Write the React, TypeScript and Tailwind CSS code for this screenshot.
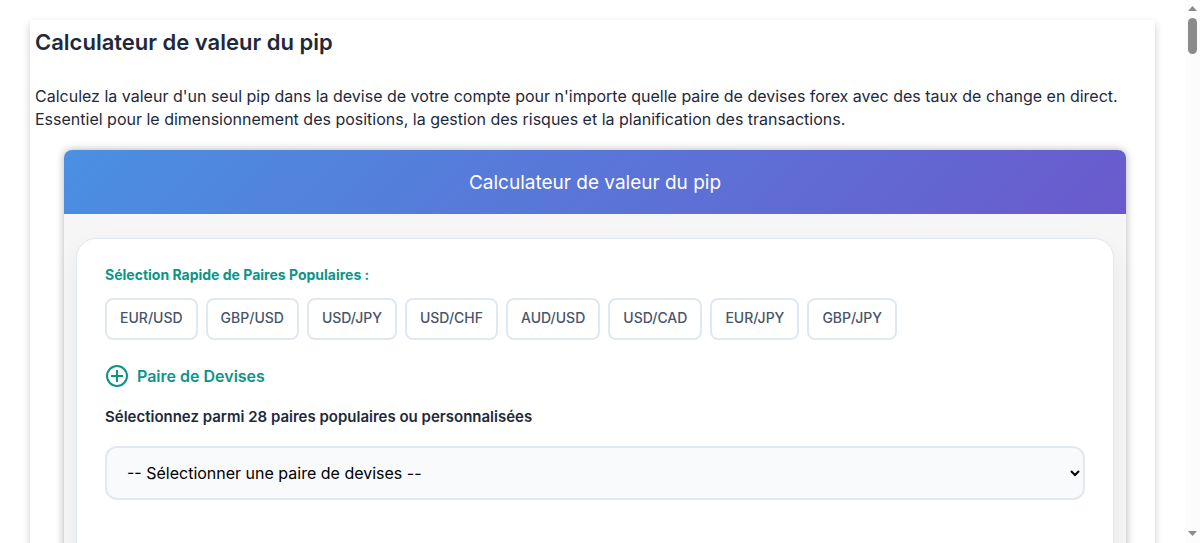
import React from 'react';

const PAIRS = ['EUR/USD', 'GBP/USD', 'USD/JPY', 'USD/CHF', 'AUD/USD', 'USD/CAD', 'EUR/JPY', 'GBP/JPY'];

const PlusCircle = () => (
  <svg
    className="h-6 w-6"
    viewBox="0 0 24 24"
    fill="none"
    stroke="currentColor"
    strokeWidth="2"
    aria-hidden="true"
  >
    <circle cx="12" cy="12" r="10" />
    <path d="M12 6v12M6 12h12" />
  </svg>
);

const QuickPairs = ({ onPick }: { onPick: (pair: string) => void }) => (
  <div>
    <p className="text-sm leading-6 font-bold text-[#0d9488]">Sélection Rapide de Paires Populaires :</p>
    <div className="mt-[11px] flex flex-wrap gap-2">
      {PAIRS.map((pair) => (
        <button
          key={pair}
          type="button"
          onClick={() => onPick(pair)}
          className="h-[42px] rounded-lg border-2 border-[#e2e8f0] bg-white px-[13px] pb-0.5 text-sm font-medium text-[#475569]"
        >
          {pair}
        </button>
      ))}
    </div>
  </div>
);

const Scrollbar = () => (
  <div className="flex w-[15px] shrink-0 flex-col items-center bg-[#fcfcfc] pt-1.5 pb-[7px]" aria-hidden="true">
    <svg className="h-[5px] w-[9px]" viewBox="0 0 9 5" fill="#8b8b8b">
      <path d="M4.5 0L9 5H0z" />
    </svg>
    <div className="mt-[7px] h-9 w-[9px] rounded-full bg-[#8b8b8b]" />
    <svg className="mt-auto h-[5px] w-[9px]" viewBox="0 0 9 5" fill="#8b8b8b">
      <path d="M0 0h9L4.5 5z" />
    </svg>
  </div>
);

export default function App() {
  const [pair, setPair] = React.useState('');

  return (
    <div className="flex h-screen overflow-hidden bg-white font-['Inter',sans-serif] text-[#1e293b]">
      <div className="min-w-0 flex-1 overflow-hidden px-[30px] pt-5">
        <main className="min-h-screen bg-white px-[5px] pt-1.5 shadow-[0_4px_8px_rgba(0,0,0,0.2)]">
          <h1 className="text-[22px] leading-8 font-semibold">Calculateur de valeur du pip</h1>
          <p className="mt-[27px] text-base leading-[23px]">
            Calculez la valeur d'un seul pip dans la devise de votre compte pour n'importe quelle paire de devises forex
            avec des taux de change en direct. Essentiel pour le dimensionnement des positions, la gestion des risques et
            la planification des transactions.
          </p>

          <section className="mt-[19px] mr-6 ml-[29px] min-h-screen rounded-lg bg-[#f6f6f6] shadow-[0_0_8px_rgba(0,0,0,0.3)]">
            <h2 className="h-16 rounded-t-lg bg-[linear-gradient(135deg,#4a90e2,#6a5acd)] text-center text-[19px] leading-[66px] font-normal text-white">
              Calculateur de valeur du pip
            </h2>
            <div className="px-3 pt-6">
              <form className="min-h-screen rounded-[20px] border border-[#e2e8f0] bg-white px-7 pt-6 shadow-[0_10px_25px_rgba(0,0,0,0.06)]">
                <QuickPairs onPick={setPair} />
                <div className="mt-6 flex items-center gap-2 text-base font-semibold text-[#0d9488]">
                  <PlusCircle />
                  <span>Paire de Devises</span>
                </div>
                <label htmlFor="pair" className="mt-[17px] block text-[15px] leading-6 font-semibold">
                  Sélectionnez parmi 28 paires populaires ou personnalisées
                </label>
                <select
                  id="pair"
                  value={pair}
                  onChange={(e) => setPair(e.target.value)}
                  className="mt-[17px] block h-[54px] w-full rounded-xl border-2 border-[#e2e8f0] bg-[#f8fafc] px-4 text-base text-black"
                >
                  <option value="">-- Sélectionner une paire de devises --</option>
                  {PAIRS.map((p) => (
                    <option key={p} value={p}>
                      {p}
                    </option>
                  ))}
                </select>
              </form>
            </div>
          </section>
        </main>
      </div>
      <Scrollbar />
    </div>
  );
}
